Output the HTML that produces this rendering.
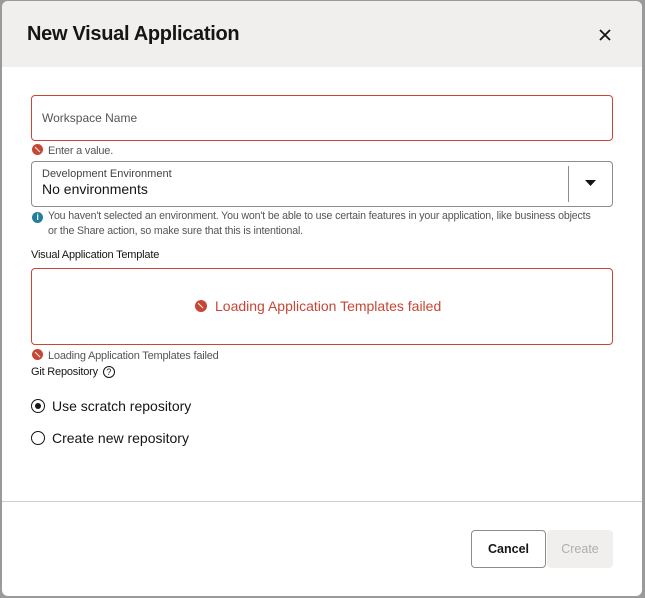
<!DOCTYPE html>
<html><head><style>
*{box-sizing:border-box;margin:0;padding:0}
body{width:645px;height:598px;background:#9a9a9a;font-family:"Liberation Sans",sans-serif;position:relative;overflow:hidden;color:#161513}
.dlg{position:absolute;left:2px;top:1px;width:640px;height:595px;background:#fff;border-radius:6px;overflow:hidden}
.hdr{position:absolute;left:0;top:0;width:100%;height:66px;background:#f1efed}
.t{position:absolute;left:25px;top:22px;font-size:20px;font-weight:bold;letter-spacing:-0.3px}
.x{position:absolute;left:596px;top:27px}
.a{position:absolute}
.box{position:absolute;border:1px solid #c74634;border-radius:4px}
.err{display:inline-block;width:11px;height:11px;border-radius:50%;background:#c74634;position:relative;vertical-align:-1px;margin-right:5px}
.err:after{content:"";position:absolute;left:5px;top:2px;width:1.3px;height:7px;background:#fff;transform:rotate(-45deg)}
.sm{font-size:11px;color:#555;letter-spacing:-0.2px}
.radio{position:absolute;width:14px;height:14px;border:1.3px solid #161513;border-radius:50%}
</style></head><body>
<div class="dlg">
<div class="hdr"></div>
<div class="t">New Visual Application</div>
<svg class="x" width="14" height="14" viewBox="0 0 14 14"><path d="M2 2L12 12M12 2L2 12" stroke="#161513" stroke-width="1.8"/></svg>
<div class="box" style="left:29px;top:94px;width:582px;height:46px"></div>
<div class="a" style="left:40px;top:110px;font-size:12px;color:#555">Workspace Name</div>
<div class="a sm" style="left:30px;top:143px"><span class="err"></span>Enter a value.</div>
<div class="a" style="left:29px;top:160px;width:582px;height:46px;border:1px solid #8f8c88;border-radius:4px"></div>
<div class="a" style="left:566px;top:165px;width:1px;height:36px;background:#8f8c88"></div>
<svg class="a" style="left:583px;top:179px" width="11" height="7"><path d="M0 0H11L5.5 6Z" fill="#161513"/></svg>
<div class="a" style="left:40px;top:167px;font-size:11px;color:#444">Development Environment</div>
<div class="a" style="left:40px;top:180px;font-size:14px">No environments</div>
<div class="a" style="left:30px;top:208px;width:600px;font-size:10.6px;color:#555;line-height:15px;letter-spacing:-0.15px;white-space:nowrap"><span style="display:inline-block;width:11px;height:11px;border-radius:50%;background:#227e9e;color:#fff;font-size:9px;font-weight:bold;text-align:center;line-height:11px;margin-right:5px;vertical-align:-1px">i</span>You haven't selected an environment. You won't be able to use certain features in your application, like business objects<br><span style="padding-left:16px">or the Share action, so make sure that this is intentional.</span></div>
<div class="a" style="left:29px;top:248px;font-size:11px;letter-spacing:-0.2px">Visual Application Template</div>
<div class="box" style="left:29px;top:267px;width:582px;height:77px"></div>
<div class="a" style="left:193px;top:297px;font-size:14px;color:#c74634"><span class="err" style="width:12px;height:12px;margin-right:8px"></span>Loading Application Templates failed</div>
<div class="a sm" style="left:30px;top:348px"><span class="err"></span>Loading Application Templates failed</div>
<div class="a" style="left:29px;top:365px;font-size:11px;letter-spacing:-0.2px">Git Repository <span style="display:inline-block;width:12px;height:12px;border:1.2px solid #161513;border-radius:50%;font-size:9px;text-align:center;line-height:10px;margin-left:2px">?</span></div>
<div class="radio" style="left:29px;top:398px"><div style="position:absolute;left:3px;top:3px;width:6px;height:6px;border-radius:50%;background:#161513"></div></div>
<div class="a" style="left:50px;top:397px;font-size:14px">Use scratch repository</div>
<div class="radio" style="left:29px;top:430px"></div>
<div class="a" style="left:50px;top:429px;font-size:14px">Create new repository</div>
<div class="a" style="left:0;top:500px;width:100%;height:1px;background:#d0cdca"></div>
<div class="a" style="left:469px;top:529px;width:75px;height:38px;border:1px solid #8f8c88;border-radius:4px;font-size:12.5px;font-weight:bold;text-align:center;line-height:36px">Cancel</div>
<div class="a" style="left:545px;top:529px;width:66px;height:38px;background:#f1efed;border-radius:4px;font-size:12.5px;color:#b0aeab;text-align:center;line-height:38px">Create</div>
</div>
</body></html>
